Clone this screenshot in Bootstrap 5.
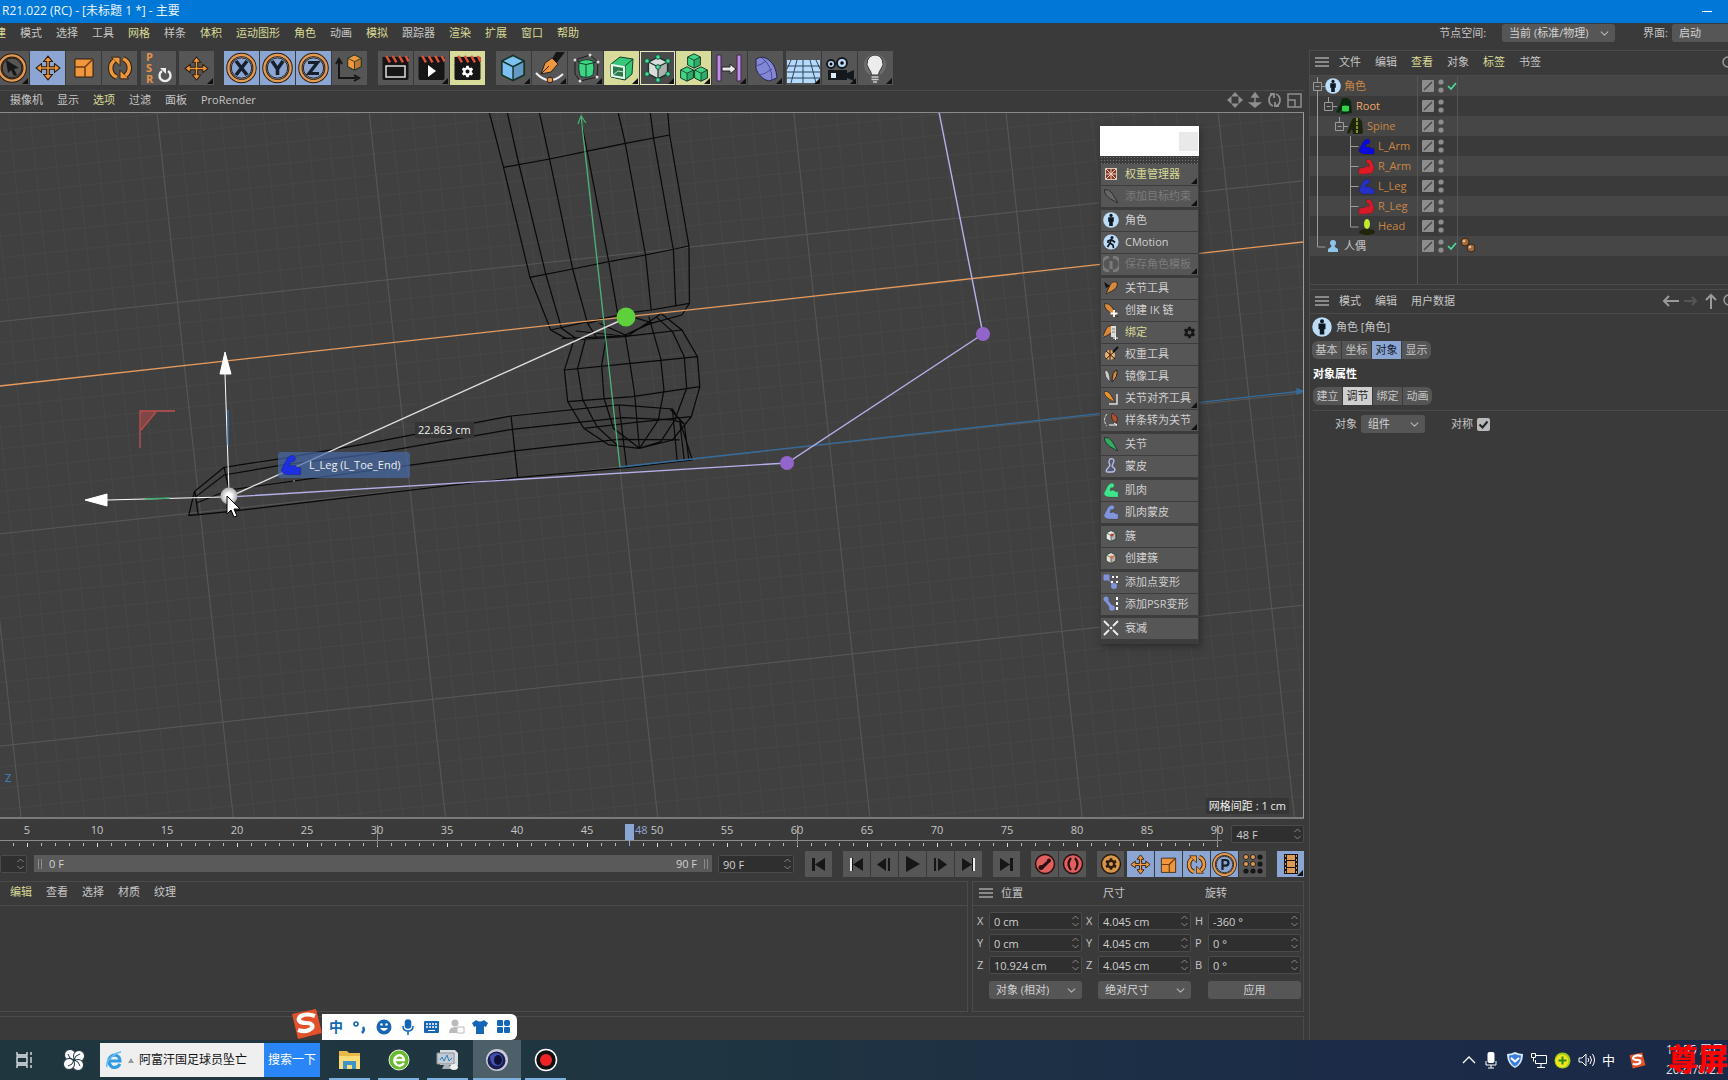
<!DOCTYPE html>
<html lang="zh-CN" data-bs-theme="dark">
<head>
<meta charset="utf-8">
<meta name="viewport" content="width=device-width, initial-scale=1">
<title>R21.022 (RC) - [未标题 1 *] - 主要</title>
<link href="https://cdn.jsdelivr.net/npm/bootstrap@5.3.0/dist/css/bootstrap.min.css" rel="stylesheet">
<script src="https://cdn.jsdelivr.net/npm/bootstrap@5.3.0/dist/js/bootstrap.bundle.min.js" defer></script>
<style>
:root{--panel:#3a3a3a;--edge:#4b4b4b;--btnbg:#565656;--txt:#c6c6c6;--yel:#d9da96;--sel:#8ba6d3;--ora:#f0963c}
body{font:11px/16px "Open Sans","Noto Sans CJK SC",sans-serif;color:var(--txt);background:var(--panel);height:100vh}
button,select,input{font:inherit;color:inherit}
svg{display:block;flex:none}
button{border:0;padding:0;background:none}
.titlebar{height:23px;background:#0078d7;color:#eaf4ff;font-size:12px;line-height:22px}
.titlebar .caption{margin-left:2px}
.menurow{height:27px;padding-bottom:7px}
.menu{gap:14px;white-space:nowrap}
.y{color:var(--yel)}
.mainmenu{margin-left:-16px}
.dd{height:18px;line-height:16px;padding:0 18px 0 7px;font-size:11px;border:0;border-radius:3px;background-color:var(--btnbg);background-position:right 6px center;background-size:9px 9px;color:#d2d2d2;width:auto}
.rightcol{width:419px;border-left:1px solid var(--edge)}
.leftcol{padding-right:5px}
.toolbar{height:40px;padding-top:1px;margin-left:-6px}
.grp{display:flex;gap:1px}
.tb{width:35px;height:34px;background:var(--btnbg);position:relative}
.tb.on,.kb.on{background:var(--sel)}
.tb.ye{background:#d8dc9b}
.tb.fr{box-shadow:inset 0 0 0 1px #e5e8c0;background:#4a4a4a}
.more::after{content:"";position:absolute;right:1px;bottom:1px;border:3px solid transparent;border-right-color:#111;border-bottom-color:#111}
.vmenu{height:22px;border-top:1px solid var(--edge);padding:0 1px 3px 10px}
.view{border-top:1px solid #8a8a8a;border-bottom:2px solid #7a7a7a;border-right:1px solid #9a9a9a;background:#404040;position:relative;overflow:hidden;min-height:0}
.scene{position:absolute;inset:0;width:100%;height:100%}
.chip{position:absolute;background:#353535;color:#eee;padding:0 3px}
.ruler{height:32px;position:relative;overflow:hidden}
.ruler svg{position:absolute;inset:0;width:100%;height:100%}
.ruler .nums{margin-left:-8px;padding-top:3px;position:relative}
.ruler .nums span{flex:0 0 70px;text-align:center}
.nowf{position:absolute;left:635px;top:3px;color:#8ba6d3}
.frame{width:74px;padding-top:6px}
.num{height:18px;border:1px solid var(--edge);background:#2f2f2f url("data:image/svg+xml,%3Csvg xmlns='http://www.w3.org/2000/svg' width='7' height='12' fill='none' stroke='%23888'%3E%3Cpath d='M.5 4l3-3 3 3M.5 8l3 3 3-3'/%3E%3C/svg%3E") no-repeat right 2px center;padding:0 4px;border-radius:2px;color:#d0d0d0;min-width:0;width:100%}
.transport{height:30px}
.kb{width:27px;height:26px;background:var(--btnbg);display:flex;align-items:center;justify-content:center;position:relative}
.range{height:17px;background:#5a5a5a;color:#d2d2d2;padding:0 4px;gap:7px}
.grip{width:4px;height:10px;border:solid #8a8a8a;border-width:0 1px}
.lower{height:131px;gap:4px}
.pane{border:1px solid var(--edge)}
.pane.flush{border-left:0}
.panehead{height:24px;border-bottom:1px solid var(--edge)}
.coord{width:332px}
.cgrid{display:grid;grid-template-columns:12px 1fr 16px 1fr 17px 1fr;padding:6px 2px 0 4px;row-gap:4px;align-items:center}
.cgrid .lab{padding-left:4px}
.cgrid .dd,.cgrid .apply{width:100%;margin-top:3px;height:18px}
.apply{background:var(--btnbg);border-radius:3px;color:#d2d2d2}
.status{height:24px;margin-top:4px;border-top:1px solid var(--edge);border-right:1px solid var(--edge)}
.ham{width:14px;height:10px;border:solid #8a8a8a;border-width:2px 0;position:relative}
.ham::after{content:"";position:absolute;left:0;right:0;top:2px;height:2px;background:#8a8a8a}
.omgr{height:235px;border-top:1px solid var(--edge);border-bottom:1px solid var(--edge)}
.objmenu{height:25px;padding:0 0 3px 5px;border-bottom:1px solid var(--edge)}
.tree{position:relative;min-height:0}
.trow{height:20px}
.trow:nth-child(odd){background:#464646}
.nm{width:108px;gap:3px;height:100%;border-right:1px solid #555;color:#c98643}
.fl{width:40px;height:100%;border-right:1px solid #555;padding-left:4px;gap:4px}
.fl .ok{margin-left:-1px}
.lv0{padding-left:15px}.lv1{padding-left:26px}.lv2{padding-left:37px}.lv3{padding-left:48px}
.treelines{position:absolute;left:0;top:0}
.amgr{border-top:1px solid var(--edge);margin-top:4px}
.tabs{gap:1px}
.tabs button{width:29px;height:18px;background:#555;color:#c6c6c6}
.tabs .on{background:var(--sel);color:#101828}
.tabs .lt{background:#cfcfcf;color:#222}
.tick{appearance:none;width:13px;height:13px;margin:0;border-radius:2px;background:#b9b9b9 url("data:image/svg+xml,%3Csvg xmlns='http://www.w3.org/2000/svg' viewBox='0 0 13 13' fill='none' stroke='%23222' stroke-width='2'%3E%3Cpath d='M2.500 6.500l3 3 5-6'/%3E%3C/svg%3E")}
.palette{position:absolute;left:1100px;top:13px;width:99px;background:#3c3c3c;box-shadow:2px 3px 6px #222a}
.palhead{height:30px;background:#fff;padding-right:1px}
.palhead button{width:19px;height:19px;background:#e9e9e9}
.dots{height:8px;background:radial-gradient(circle,#777 0 .6px,transparent 1px) 0 0/3px 3px}
.palbody{gap:3px;padding:0 1px 5px}
.pg{gap:1px}
.pg button{height:21px;background:#565656;color:#d0d0d0;display:flex;align-items:center;gap:6px;padding:0 0 1px 2px;position:relative;white-space:nowrap;width:100%}
.pg .off{color:#7b7b7b}
.pg .y{color:var(--yel)}
.pg .gearend{position:absolute;right:2px}
.taskbar{height:40px;background:linear-gradient(90deg,#20363f 0,#1f3541 40%,#1b2b48 80%,#1a2946 100%);color:#fff;position:relative}
.tk{width:49px;height:40px;display:flex;align-items:center;justify-content:center}
.app{box-shadow:inset 0 -2px #7db2e0;width:41px;margin:0 4px}
.app.live{width:48px;margin:0 0 0 1px;background:#4d6069}
.finder{width:164px;height:34px;background:#efefef;color:#111;gap:5px;padding-left:5px}
.finder input{border:0;background:none;width:118px;padding:0;color:#111;font-size:12px}
.go{width:56px;height:34px;background:#2a86f7;color:#fff;font-size:12px}
.tray{gap:7px}
.clock{width:62px;margin-left:13px;font-size:12px;line-height:20px;position:relative;white-space:nowrap;color:#dfe4ee}
.stamp{position:absolute;left:2px;top:8px;color:#f00;font-weight:900;font-size:30px;line-height:22px}
.ime{position:absolute;left:291px;bottom:40px;height:30px}
.imebar{background:#fff;height:26px;width:195px;color:#1666b5;font-size:14px;font-weight:700;padding-left:2px;margin-left:-1px}
.imebar>*{width:24px;display:flex;justify-content:center}
</style>
</head>
<body class="d-flex flex-column overflow-hidden">
<svg width="0" height="0" class="position-absolute">
<defs>
<symbol id="arrows" viewBox="0 0 24 24"><path d="M12 1l4 5h-2.800v4.800H18V8l5 4-5 4v-2.800h-4.800V18H16l-4 5-4-5h2.800v-4.800H6V16l-5-4 5-4v2.800h4.800V6H8z" fill="#f0963c" stroke="#2b1c0c"/></symbol>
<symbol id="scale" viewBox="0 0 24 24"><path d="M3 4h18v18H3z" fill="#f0963c" stroke="#2b1c0c"/><path d="M3 12h10v10M13 12l8-8" stroke="#6b3d10" fill="none" stroke-width="1.500"/></symbol>
<symbol id="rot" viewBox="0 0 24 24"><g fill="none" stroke="#2b1c0c" stroke-width="5"><path d="M9 20.500a9 9 0 0 1-2-15.500M15 3.500a9 9 0 0 1 2 15.500"/></g><path d="M4 2h8v8zM20 22h-8v-8z" fill="#f0963c" stroke="#2b1c0c" stroke-width=".8"/><g fill="none" stroke="#f0963c" stroke-width="3.200"><path d="M9 20.500a9 9 0 0 1-2-15.500M15 3.500a9 9 0 0 1 2 15.500"/></g></symbol>
<symbol id="ring" viewBox="0 0 32 32"><circle cx="16" cy="16" r="13.500" fill="none" stroke="#2b1c0c" stroke-width="4.500"/><circle cx="16" cy="16" r="13.500" fill="none" stroke="#e09a55" stroke-width="2.500"/><circle cx="16" cy="16" r="10.500" fill="none" stroke="#2b1c0c"/></symbol>
<symbol id="clap" viewBox="0 0 30 28"><rect x="1" y="8" width="28" height="19" rx="2" fill="#161616"/><path d="M1 2h28v7H1z" fill="#161616"/><path d="M5 1l4 7M12 1l4 7M19 1l4 7M26 1l3 6" stroke="#e0533c" stroke-width="2.500"/></symbol>
<symbol id="gear" viewBox="0 0 16 16"><path d="M6.500 1h3l.4 2 1.500.8 2-.7 1.500 2.600-1.600 1.400v1.800l1.600 1.400-1.500 2.600-2-.7-1.500.8-.4 2h-3l-.4-2-1.500-.8-2 .7L1.100 10.300l1.600-1.400V7.100L1.100 5.700l1.500-2.600 2 .7L6.100 3zM8 5.500a2.500 2.500 0 1 0 0 5 2.500 2.500 0 0 0 0-5z" fill="currentColor" fill-rule="evenodd"/></symbol>
<symbol id="man" viewBox="0 0 16 16"><circle cx="8" cy="8" r="7.800" fill="#bcdcf8"/><circle cx="8" cy="3.400" r="1.600" fill="#101820"/><path d="M5.200 5.200h5.600v4.500h-1V14H6.200V9.700h-1z" fill="#101820"/></symbol>
<symbol id="walk" viewBox="0 0 16 16"><circle cx="8" cy="8" r="7.600" fill="#bcdcf8"/><circle cx="9" cy="3.500" r="1.500" fill="#101820"/><path d="M8.500 5L7 9l3 2 .5 3M7 9l-2.500 4M8.500 5.500L5 7v2M9 6l3 2.500" stroke="#101820" stroke-width="1.700" fill="none"/></symbol>
<symbol id="armL" viewBox="0 0 18 18"><path d="M5 5q2-4 6-4l2 3-2 2.500H8.500L8 10q5-2 6 1h3v6H8q-6 0-7-4z" fill="currentColor" stroke="#0004" stroke-width=".6"/></symbol>
<symbol id="armR" viewBox="0 0 18 18"><path d="M9 2q4-2 5.500 2L17 10q0 5-4 6.500-6 1-12 .5v-6l6-1q3-2 5-.5L11.500 6 9 5.500z" fill="currentColor" stroke="#0004" stroke-width=".6"/></symbol>
<symbol id="bone" viewBox="0 0 16 16"><path d="M1.500 1.500Q6 1 9 5l6 10Q6 11 3 7 1 4 1.500 1.500z" fill="currentColor" stroke="#222" stroke-width=".8"/></symbol>
<symbol id="boneR" viewBox="0 0 16 16"><path d="M14 2q-5-1-7 3L3 14q7-3 10-6 2-3 1-6z" fill="currentColor" stroke="#222" stroke-width=".8"/></symbol>
<symbol id="cubelet" viewBox="0 0 20 20"><path d="M10 1l8 4v10l-8 4-8-4V5z" fill="currentColor" stroke="#163527" stroke-width="1.200"/><path d="M2 5l8 4 8-4M10 9v10" stroke="#163527" fill="none"/><path d="M10 9l8-4v10l-8 4z" fill="#0003"/></symbol>
<symbol id="flag" viewBox="0 0 20 14"><rect width="12" height="12" x="0" y="1" rx="1" fill="#8d8d8d"/><path d="M2 11l8-8" stroke="#444" stroke-width="1.500"/></symbol>
<symbol id="ddots" viewBox="0 0 6 16"><circle cx="3" cy="4" r="2.600" fill="#8d8d8d"/><circle cx="3" cy="12" r="2.600" fill="#8d8d8d"/></symbol>
<symbol id="chk" viewBox="0 0 10 10"><path d="M1 5l3 3 5-6" fill="none" stroke="#4ddb9a" stroke-width="1.600"/></symbol>
<symbol id="slogo" viewBox="0 0 32 32"><path d="M1 6l24-5 6 24-24 6z" fill="#e2512a"/><path d="M24 8q-8-3-14 0c-5 4-1 7 5 7 8 0 8 5 3 7-4 2-8 1-11 0" fill="none" stroke="#fff" stroke-width="4.200"/></symbol>
</defs>
</svg>

<header class="titlebar d-flex justify-content-between"><span class="caption">R21.022 (RC) - [未标题 1 *] - 主要</span><button aria-label="最小化" class="pe-3"><svg width="10" height="2"><rect width="10" height="1" fill="#fff"/></svg></button></header>

<div class="menurow d-flex align-items-center">
<nav class="menu mainmenu d-flex flex-grow-1"><button class="y">创建</button><button>模式</button><button>选择</button><button>工具</button><button class="y">网格</button><button>样条</button><button class="y">体积</button><button class="y">运动图形</button><button class="y">角色</button><button>动画</button><button class="y">模拟</button><button>跟踪器</button><button class="y">渲染</button><button class="y">扩展</button><button class="y">窗口</button><button class="y">帮助</button></nav>
<label for="space" class="me-3">节点空间:</label><select id="space" class="dd form-select" style="width:113px"><option>当前 (标准/物理)</option></select>
<label for="lay" class="ms-4 ps-1 me-1">界面:</label><select id="lay" class="dd form-select rounded-end-0" style="width:56px;background-image:none"><option>启动</option></select>
</div>

<main class="d-flex flex-grow-1" style="min-height:0">
<div class="leftcol d-flex flex-column flex-grow-1" style="min-width:0">
<div class="toolbar d-flex">
 <div class="grp me-1">
  <button class="tb more" aria-label="选择"><svg width="35" height="34"><use href="#ring" x="3" y="2" width="30" height="30"/><path d="M12 9l13 8-5 1 3 6-3 1-3-6-3 3z" fill="#181818"/></svg></button>
  <button class="tb on" aria-label="移动"><svg width="35" height="34"><use href="#arrows" x="5" y="4" width="26" height="26"/></svg></button>
  <button class="tb" aria-label="缩放"><svg width="35" height="34"><use href="#scale" x="6" y="4" width="24" height="24"/></svg></button>
  <button class="tb" aria-label="旋转"><svg width="35" height="34"><use href="#rot" x="5" y="4" width="26" height="26"/></svg></button>
 </div>
 <button class="tb" style="margin-right:3px" aria-label="PSR"><svg width="35" height="34"><g fill="#e8924a" font-size="11" font-weight="700" font-family="Open Sans"><text x="5" y="10">P</text><text x="5" y="21">S</text><text x="5" y="32">R</text></g><path d="M21 20a5.500 5.500 0 1 0 6 0" fill="none" stroke="#eee" stroke-width="2.400"/><path d="M19 17h6v6z" fill="#eee"/></svg></button>
 <button class="tb more" style="margin-right:10px" aria-label="放置"><svg width="35" height="34"><use href="#arrows" x="5" y="5" width="25" height="25"/></svg></button>
 <div class="grp" style="margin-right:11px">
  <button class="tb on" aria-label="X 轴"><svg width="35" height="34"><use href="#ring" x="2" y="1" width="31" height="32"/><path d="M12 10l11 14M23 10L12 24" stroke="#16202c" stroke-width="3.600"/></svg></button>
  <button class="tb on" aria-label="Y 轴"><svg width="35" height="34"><use href="#ring" x="2" y="1" width="31" height="32"/><path d="M12 10l5.500 8v6M23 10l-5.500 8" stroke="#16202c" stroke-width="3.600" fill="none"/></svg></button>
  <button class="tb on" aria-label="Z 轴"><svg width="35" height="34"><use href="#ring" x="2" y="1" width="31" height="32"/><path d="M12 11.500h9.500L13 22.500h10" stroke="#16202c" stroke-width="3.200" fill="none"/></svg></button>
  <button class="tb" aria-label="坐标系统"><svg width="35" height="34"><path d="M7 10v17h17M4 13l3-5 3 5M22 24l5 3-5 3" fill="none" stroke="#161616" stroke-width="2"/><g color="#f0963c"><use href="#cubelet" x="14" y="3" width="17" height="17"/></g></svg></button>
 </div>
 <div class="grp" style="margin-right:11px">
  <button class="tb" aria-label="渲染视图"><svg width="35" height="34"><use href="#clap" x="3" y="4" width="29" height="26"/><path d="M8 15h19v11H8z" fill="none" stroke="#ddd" stroke-width="1.500"/></svg></button>
  <button class="tb more" aria-label="渲染"><svg width="35" height="34"><use href="#clap" x="3" y="4" width="29" height="26"/><path d="M14 14l8 6-8 6z" fill="#fff"/></svg></button>
  <button class="tb ye" aria-label="渲染设置"><svg width="35" height="34"><use href="#clap" x="3" y="4" width="29" height="26"/><g color="#fff"><use href="#gear" x="11" y="14" width="13" height="13"/></g></svg></button>
 </div>
 <div class="grp" style="margin-right:3px">
  <button class="tb more" aria-label="立方体"><svg width="35" height="34"><g color="#7cc0f4"><use href="#cubelet" x="3" y="3" width="28" height="28"/></g></svg></button>
  <button class="tb more" aria-label="画笔"><svg width="35" height="34"><path d="M24 1h9L23 14l-4-4z" fill="#161616"/><path d="M20 7l6 6-7 8-10 2 4-11z" fill="#f0963c" stroke="#222"/><path d="M9 23l8-8" stroke="#222"/><path d="M4 22q13 14 27 1" fill="none" stroke="#eee" stroke-width="2"/><circle cx="18" cy="29" r="2.800" fill="#f0963c" stroke="#222"/></svg></button>
  <button class="tb more" aria-label="细分曲面"><svg width="35" height="34"><path d="M7 9l15-5 8 7-1 15-17 4-5-7zM7 9l9 4 14-2" fill="none" stroke="#1b1b1b"/><path d="M11 11q6-4 14-1 2 7 0 14-6 4-13 1-2-7-1-14z" fill="#3ed684" stroke="#14402a"/><path d="M11 12q7 3 14 0M18 14v12" stroke="#14402a" fill="none"/><g fill="#ddd"><circle cx="7" cy="9" r="1.500"/><circle cx="22" cy="4" r="1.500"/><circle cx="30" cy="11" r="1.500"/><circle cx="29" cy="26" r="1.500"/><circle cx="12" cy="30" r="1.500"/></g></svg></button>
  <button class="tb ye more" aria-label="挤压"><svg width="35" height="34"><path d="M7 13l9-7 13 2-1 15-7 6-14-3z" fill="#35c878" stroke="#143d28"/><path d="M21 15l8-7M21 15v14" stroke="#143d28"/><path d="M8 14l12 2v11L8 25z" fill="#2b7a4c" stroke="#e4f8ec" stroke-width="2"/><path d="M9 24l5-4 6 1" stroke="#bff0d2" fill="none"/></svg></button>
  <button class="tb fr more" aria-label="晶格"><svg width="35" height="34"><g color="#d9dcda"><use href="#cubelet" x="6" y="5" width="24" height="24"/></g><g fill="#4bdc93" stroke="#154"><circle cx="18" cy="6" r="2.300"/><circle cx="7" cy="10" r="2.300"/><circle cx="28" cy="10" r="2.300"/><circle cx="18" cy="16" r="2.300"/><circle cx="7" cy="23" r="2.300"/><circle cx="28" cy="23" r="2.300"/><circle cx="18" cy="29" r="2.300"/></g></svg></button>
  <button class="tb ye more" aria-label="克隆"><svg width="35" height="34"><g color="#3ed684"><use href="#cubelet" x="10" y="2" width="16" height="16"/><use href="#cubelet" x="3" y="15" width="16" height="16"/><use href="#cubelet" x="17" y="15" width="16" height="16"/></g></svg></button>
  <button class="tb more" aria-label="域"><svg width="35" height="34"><path d="M5 4h4v26H5zM25 4h4v26h-4z" fill="#c08ae6" stroke="#3a2450"/><path d="M10 16h8v-3l6 5-6 5v-3h-8z" fill="#e8e8e8" stroke="#222"/></svg></button>
  <button class="tb more" aria-label="变形器"><svg width="35" height="34"><path d="M8 8q7-4 13 1 7 5 8 18l-8 3Q12 28 8 18z" fill="#8287d6" stroke="#26264a"/><path d="M14 7q10 7 10 22M8 15q5-1 10-5M12 24q5-1 12-6" fill="none" stroke="#4a4e96"/></svg></button>
 </div>
 <div class="grp">
  <button class="tb more" aria-label="地面"><svg width="35" height="34"><path d="M1 9h33v23H1z" fill="#b5dafc"/><path d="M1 15h33M1 21h33M1 27h33M11 9L5 32M17 9v23M24 9l6 23M5 9l-4 9M30 9l4 9" stroke="#2f4558" fill="none"/></svg></button>
  <button class="tb more" aria-label="摄像机"><svg width="35" height="34"><circle cx="9" cy="13" r="4" fill="#bcdcf8" stroke="#15191d" stroke-width="2"/><circle cx="20" cy="12" r="5" fill="#bcdcf8" stroke="#15191d" stroke-width="2"/><circle cx="9" cy="13" r="1.500"/><circle cx="20" cy="12" r="1.800"/><path d="M6 19h19v3l7-3v11l-7-3v2H6z" fill="#15191d"/><path d="M9 22h5v5H9z" fill="#dcecfb"/></svg></button>
  <button class="tb more" aria-label="灯光"><svg width="35" height="34"><circle cx="17" cy="14" r="11" fill="#fff2"/><path d="M17 4a8.500 8.500 0 0 1 6 14q-2 2-2.500 6h-7q-.5-4-2.500-6a8.500 8.500 0 0 1 6-14z" fill="#ececec" stroke="#333"/><path d="M13.500 26h7M13.500 28.500h7M15 31h4" stroke="#ccc" stroke-width="1.500"/></svg></button>
 </div>
</div>

<div class="vmenu d-flex align-items-center justify-content-between">
 <nav class="menu d-flex"><button>摄像机</button><button>显示</button><button class="y">选项</button><button>过滤</button><button>面板</button><button>ProRender</button></nav>
 <svg width="76" height="16" fill="none" stroke="#8f8f8f" stroke-width="2"><path d="M8 0l4 4.500H4zM8 16l4-4.500H4zM0 8l4.500-4v8zM16 8l-4.500-4v8z" fill="#8f8f8f" stroke="none"/><path d="M28 3v8M28 1l3 4h-6zM28 15l5-4H23z" fill="#8f8f8f" stroke-width="1.500"/><path d="M46 14a6.500 6.500 0 0 1 0-12M49 2a6.500 6.500 0 0 1 0 12M43 2h4v4M52 14h-4v-4" stroke-width="1.800"/><path d="M61 2h13v13H61zM61 8h7v7" stroke-width="1.500"/></svg>
</div>

<section class="view flex-grow-1">
<svg class="scene" viewBox="0 113 1303 704" preserveAspectRatio="xMinYMin slice">
 <defs>
  <pattern id="fine" width="21.100" height="21.100" patternUnits="userSpaceOnUse" patternTransform="translate(177 302) rotate(-6.170)"><path d="M0 .5h21.100M.5 0v21.100" stroke="#464646" fill="none"/></pattern>
  <pattern id="coarse" width="211" height="211" patternUnits="userSpaceOnUse" patternTransform="translate(177 302) rotate(-6.170)"><path d="M0 .5h211M.5 0v211" stroke="#565656" fill="none"/></pattern>
  <radialGradient id="ball"><stop offset=".3" stop-color="#fff"/><stop offset="1" stop-color="#aaa"/></radialGradient>
 </defs>
 <rect y="113" width="1303" height="704" fill="url(#fine)"/><rect y="113" width="1303" height="704" fill="url(#coarse)"/>
 <g transform="translate(0 110) scale(.4719 .3333)" fill="none" stroke="#080808" stroke-width="1.200">
  <path vector-effect="non-scaling-stroke" d="M1037 8l30 164 56 330 44 158 33 26M1075 8l25 157 57 330 33 160 30 30M1143 8l22 142 49 330 31 160 18 40M1230 20l15 110 45 325 20 165M1310 8l15 92 43 335 12 165M1378 8l7 77 42 335 5 170M1415 8l4 67 41 333 1 172-16 35M1067 172l98-25 75-22 85-25 94-25M1123 502l91-25 76-22 78-20 92-27M1167 660l78-25 95-28 40-7 81-20M1190 686l130-8 60-38 65-25M1245 640l75-28 60 26-60 40-100-15M1270 640l60 38 70-66"/>
  <path vector-effect="non-scaling-stroke" d="M1215 695l-19 85 7 95 34 80 53 50 65 10 70-25 40-70 18-90-5-90-33-80-45-50M1240 690l-16 85 11 95 30 80 45 58M1285 680l-10 85 5 100 20 90 55 60M1325 675l10 85 10 95 5 85 5 75M1375 620l25 125 7 95-12 90-40 85M1390 620l35 45 25 75 5 95-25 95-30 65-45 20M1196 780l141-20 141-20M1203 875l137-15 143-30M1215 690l105-10 125-20M1237 955l110-18 118-17"/>
  <path vector-effect="non-scaling-stroke" d="M475 1072l125-27 180-45 303-82 227-33 115 12 15 33 27 120M415 1160l60-65 125-30 180-32 305-75 235-35 105 7 25 10M415 1180l70-40 205-40 400-77 220-35 130 2M405 1216l80-11 610-102 233-30 139-23M475 1072l-63 73-12 71 20-2-7-69M475 1072l10 68 5 65M1083 918l14 185M1312 888l16 185M1425 897l10 156M1440 930l10 123M1420 897l30 45 10 110"/>
 </g>
 <path d="M0 386L1303 242" stroke="#e89a5c" stroke-width="1.300"/>
 <path d="M620 467L1303 391M1303 391l-6-2v5z" stroke="#336c9e" fill="#336c9e" stroke-width="1.300"/>
 <path d="M581 116l39 351M578 124l3-8 5 7" stroke="#45b877" fill="none" stroke-width="1.200"/>
 <path d="M939 112L983 334 787 463 229 497" stroke="#b4b0e8" stroke-width="1.400" fill="none"/>
 <path d="M229 497L626 318" stroke="#ddd" stroke-width="1.400"/>
 <circle cx="983" cy="334" r="7" fill="#9265cb"/><circle cx="787" cy="463" r="7" fill="#9265cb"/><circle cx="626" cy="317" r="9.500" fill="#5ed03b"/>
 <path d="M229 492L225 374M225 352l-5 22h11zM222 497l-115 3M85 500l22-6v12z" fill="#fff" stroke="#fff"/>
 <path d="M228 410v35" stroke="#2e7fc4"/><path d="M145 499l25-1" stroke="#3fae72" stroke-width="1.500"/>
 <path d="M140 448v-37h35M141 430l15-18" fill="none" stroke="#c0504d" stroke-width="1.300"/><path d="M140 411h17l-16 20z" fill="#b84a4a88"/>
 <circle cx="229" cy="496" r="8.500" fill="url(#ball)"/>
 <rect x="278" y="452" width="132" height="26" rx="3" fill="#456aa8b0"/>
 <g color="#1d2fe0"><use href="#armL" x="280" y="454" width="22" height="22"/></g>
 <path d="M227 496v18l4-4 3 7 3-1-3-7h6z" fill="#fff" stroke="#000"/>
 <path d="M293 481h2" stroke="#aaa"/>
</svg>
<span class="chip" style="left:415px;top:309px">22.863 cm</span>
<span class="chip bg-transparent" style="left:306px;top:344px">L_Leg (L_Toe_End)</span>
<span class="chip bg-transparent" style="left:2px;top:657px;color:#3f83c8">Z</span>
<span class="chip" style="right:14px;bottom:3px">网格间距 : 1 cm</span>
<aside class="palette">
 <div class="palhead d-flex justify-content-end align-items-center"><button aria-label="关闭"></button></div>
 <div class="dots"></div>
 <div class="palbody d-flex flex-column">
  <div class="pg d-flex flex-column">
   <button class="y more"><svg width="16" height="16"><path d="M2 2h12v12H2z" fill="#d8c8b8"/><path d="M3 3h10v10H3z" fill="#8a3522"/><path d="M3 3l10 10M13 3L3 13M8 3v10M3 8h10" stroke="#e4d4c8"/></svg>权重管理器</button>
   <button class="off more"><svg width="16" height="16" color="#666"><use href="#bone"/></svg>添加目标约束</button></div>
  <div class="pg d-flex flex-column">
   <button><svg width="16" height="16"><use href="#man"/></svg>角色</button>
   <button><svg width="16" height="16"><use href="#walk"/></svg>CMotion</button>
   <button class="off more"><svg width="16" height="16"><path d="M6 1a7 7 0 0 0 0 14M10 1a7 7 0 0 1 0 14" fill="none" stroke="#7a7a7a" stroke-width="3"/><path d="M8 5v8" stroke="#7a7a7a" stroke-width="3"/></svg>保存角色模板</button></div>
  <div class="pg d-flex flex-column">
   <button><svg width="16" height="16" color="#d88a3a"><use href="#boneR"/><path d="M1 2l6 4-4 2z" fill="#111"/></svg>关节工具</button>
   <button><svg width="16" height="16" color="#d88a3a"><use href="#bone"/><path d="M11 8v7M7.500 11.500h7" stroke="#fff" stroke-width="1.800"/></svg>创建 IK 链</button>
   <button class="y"><svg width="16" height="16" color="#d88a3a"><use href="#boneR" x="-4"/><path d="M8 2h5v11H8z" fill="#ddd"/><path d="M9 5h3M9 8h3" stroke="#777"/><path d="M10 14h5M12.500 12v4" stroke="#fff"/></svg>绑定<svg class="gearend" width="13" height="13" color="#161616"><use href="#gear"/></svg></button>
   <button><svg width="16" height="16"><circle cx="7" cy="9" r="5" fill="#e8b070"/><path d="M3 5l9 8M12 5l-9 8M7 4v10" stroke="#2b1a10"/><path d="M10 6l5-5" stroke="#111" stroke-width="2"/></svg>权重工具</button>
   <button><svg width="16" height="16"><path d="M2 2q5 0 5 12Q1 9 2 2z" fill="#ccc" stroke="#333" stroke-width=".7"/><path d="M14 2q-5 1-5 12 6-5 5-12z" fill="#d88a3a" stroke="#222"/></svg>镜像工具</button>
   <button class="more"><svg width="16" height="16" color="#e8922e"><use href="#bone" width="13" height="13"/><path d="M14 4v10H6" stroke="#ddd" stroke-width="1.500" fill="none"/></svg>关节对齐工具</button>
   <button class="more"><svg width="16" height="16"><path d="M4 2q-5 6 0 12" fill="none" stroke="#ddd" stroke-dasharray="3 1"/><path d="M9 1q8 4 4 10Q7 8 9 1z" fill="#b5502a" stroke="#222" stroke-width=".7"/><path d="M6 13h8l-3-2" stroke="#fff" fill="none"/></svg>样条转为关节</button></div>
  <div class="pg d-flex flex-column">
   <button><svg width="16" height="16" color="#2fae60"><use href="#bone"/></svg>关节</button>
   <button><svg width="16" height="16"><path d="M7 1q4-1 4 2L9 8l3 3q0 3-3 3H4q-2-1 1-4l2-3q-2-3 0-6z" fill="#555a70" stroke="#b8bfe6" stroke-width="1.300"/></svg>蒙皮</button></div>
  <div class="pg d-flex flex-column">
   <button><svg width="16" height="16" color="#3fe58c"><use href="#armL"/></svg>肌肉</button>
   <button><svg width="16" height="16" color="#8095dc"><use href="#armL"/></svg>肌肉蒙皮</button></div>
  <div class="pg d-flex flex-column">
   <button><svg width="16" height="16" color="#e8e8e8"><use href="#cubelet" x="2" y="2" width="12" height="12"/><circle cx="9" cy="7" r="1.600" fill="#c03a2a"/></svg>簇</button>
   <button><svg width="16" height="16" color="#eadbd2"><use href="#cubelet" x="2" y="2" width="12" height="12"/><circle cx="9" cy="7" r="1.600" fill="#e0703a"/></svg>创建簇</button></div>
  <div class="pg d-flex flex-column">
   <button><svg width="16" height="16"><path d="M4 4l7 8M1 1h5v5H1z" stroke="#7f93dc" fill="#7f93dc"/><circle cx="11" cy="12" r="3" fill="#7f93dc"/><path d="M9 3h2M13 3h2M14 7v2M9 7v2" stroke="#fff" stroke-width="2"/></svg>添加点变形</button>
   <button><svg width="16" height="16"><path d="M3 4l6 8" stroke="#7f93dc" stroke-width="3"/><circle cx="3" cy="3" r="2.500" fill="#7f93dc"/><circle cx="9" cy="12" r="2.800" fill="#7f93dc"/><path d="M14 1v3M14 6v3M14 11v3" stroke="#fff" stroke-width="2"/></svg>添加PSR变形</button></div>
  <div class="pg d-flex flex-column"><button><svg width="16" height="16"><path d="M1 1l5 5M15 1l-5 5M1 15l5-5M15 15l-5-5" stroke="#eee" stroke-width="1.800"/><circle cx="8" cy="8" r="1.300" fill="#eee"/></svg>衰减</button></div>
 </div>
</aside>
</section>

<div class="d-flex">
 <div class="ruler flex-grow-1 me-1">
  <svg aria-hidden="true"><defs><pattern id="t1" x="13" width="14" height="40" patternUnits="userSpaceOnUse"><path d="M.5 24v3" stroke="#bbb"/></pattern><pattern id="t5" x="27" width="70" height="40" patternUnits="userSpaceOnUse"><path d="M.5 24v4" stroke="#ddd"/></pattern></defs><rect width="1224" height="32" fill="url(#t1)"/><rect width="1224" height="32" fill="url(#t5)"/><path d="M0 21.500h1222M377.500 6v21M797.500 6v21M1217.500 6v21" stroke="#8c8c8c"/><path d="M625 5h9v16h-4v6h-1v-6h-4z" fill="#8ba6d3"/></svg>
  <div class="nums d-flex"><span>5</span><span>10</span><span>15</span><span>20</span><span>25</span><span>30</span><span>35</span><span>40</span><span>45</span><span>50</span><span>55</span><span>60</span><span>65</span><span>70</span><span>75</span><span>80</span><span>85</span><span>90</span></div><span class="nowf">48</span>
 </div>
 <div class="frame"><input class="num" aria-label="当前帧" value="48 F"></div>
</div>

<div class="transport d-flex align-items-start">
 <input class="num mt-1" aria-label="起始" value="" style="width:27px;margin-right:7px">
 <div class="range d-flex align-items-center flex-grow-1 mt-1" style="margin-right:6px"><i class="grip"></i><span class="flex-grow-1">0 F</span><span>90 F</span><i class="grip"></i></div>
 <input class="num mt-1" aria-label="结束" value="90 F" style="width:76px;margin-right:11px">
 <button class="kb" style="margin-right:11px" aria-label="开头"><svg width="15" height="15"><path d="M1 1h3v13H1zM14 1v13L4 7.500z" fill="#161616"/></svg></button>
 <div class="grp" style="margin-right:11px">
  <button class="kb" aria-label="上一关键帧"><svg width="15" height="15"><path d="M1 1h2v13H1z" fill="#eee"/><path d="M3 1h1v13H3zM14 1v13L4 7.500z" fill="#161616"/></svg></button>
  <button class="kb" aria-label="上一帧"><svg width="15" height="15"><path d="M9 1v13L0 7.500zM11 1h2v13h-2z" fill="#161616"/></svg></button>
  <button class="kb" aria-label="播放"><svg width="15" height="16"><path d="M1 0l14 8-14 8z" fill="#161616"/></svg></button>
  <button class="kb" aria-label="下一帧"><svg width="15" height="15"><path d="M5 1v13l9-6.500zM1 1h2v13H1z" fill="#161616"/></svg></button>
  <button class="kb" aria-label="下一关键帧"><svg width="15" height="15"><path d="M12 1h2v13h-2z" fill="#eee"/><path d="M11 1h1v13h-1zM1 1v13l10-6.500z" fill="#161616"/></svg></button>
 </div>
 <button class="kb" style="margin-right:11px" aria-label="结尾"><svg width="15" height="15"><path d="M11 1h3v13h-3zM1 1v13l10-6.500z" fill="#161616"/></svg></button>
 <div class="grp" style="margin-right:11px">
  <button class="kb" aria-label="记录"><svg width="22" height="22"><circle cx="11" cy="11" r="9.500" fill="#e0605e" stroke="#2a1010" stroke-width="1.500"/><path d="M6 14l8-7 2 2-7 7z" fill="#2a1010"/><circle cx="7" cy="14.500" r="2.500" fill="#2a1010"/><circle cx="15" cy="7.500" r="2" fill="#2a1010"/></svg></button>
  <button class="kb" aria-label="自动关键帧"><svg width="22" height="22"><circle cx="11" cy="11" r="9.500" fill="#e0605e" stroke="#2a1010" stroke-width="1.500"/><path d="M9 5q-5 6 0 12M13 5q5 6 0 12" fill="none" stroke="#2a1010" stroke-width="2.200"/></svg></button>
 </div>
 <button class="kb" style="margin-right:3px" aria-label="关键帧选项"><svg width="22" height="22"><circle cx="11" cy="11" r="9.500" fill="#d9964e" stroke="#2b1c0c" stroke-width="1.500"/><g color="#2b1c0c"><use href="#gear" x="4.500" y="4.500" width="13" height="13"/></g></svg></button>
 <div class="grp" style="margin-right:11px">
  <button class="kb on" aria-label="位置"><svg width="21" height="21"><use href="#arrows"/></svg></button>
  <button class="kb on" aria-label="缩放"><svg width="19" height="19"><use href="#scale"/></svg></button>
  <button class="kb on" aria-label="旋转"><svg width="21" height="21"><use href="#rot"/></svg></button>
  <button class="kb on" aria-label="参数"><svg width="25" height="25"><use href="#ring"/><path d="M10.500 18V8h3q3 0 3 2.800t-3 2.800h-3" fill="none" stroke="#16202c" stroke-width="2.200"/></svg></button>
  <button class="kb" aria-label="点级别"><svg width="22" height="22"><g fill="#e09a55" stroke="#222"><circle cx="4" cy="4" r="2.500"/><circle cx="11" cy="4" r="2.500"/><circle cx="4" cy="11" r="2.500"/><circle cx="11" cy="11" r="2.500"/></g><g fill="#161616"><circle cx="18" cy="4" r="2.600"/><circle cx="18" cy="11" r="2.600"/><circle cx="4" cy="18" r="2.600"/><circle cx="11" cy="18" r="2.600"/><circle cx="18" cy="18" r="2.600"/></g></svg></button>
 </div>
 <button class="kb on more" aria-label="时间线"><svg width="16" height="22"><path d="M1 1h14v20H1z" fill="#161616"/><path d="M4 2h8v5H4zM4 8h8v6H4zM4 15h8v5H4z" fill="#e09a55"/><path d="M2.500 2v18M13.500 2v18" stroke="#e09a55" stroke-dasharray="2 2"/></svg></button>
</div>

<div class="lower d-flex">
 <section class="pane flush flex-grow-1"><nav class="panehead menu d-flex align-items-center" style="padding:0 0 3px 10px"><button class="y">编辑</button><button>查看</button><button>选择</button><button>材质</button><button>纹理</button></nav></section>
 <section class="pane coord">
  <div class="panehead d-flex align-items-center" style="padding:0 0 1px 6px"><i class="ham me-2"></i><span style="width:102px">位置</span><span style="width:102px">尺寸</span><span>旋转</span></div>
  <div class="cgrid">
   <label for="px">X</label><input id="px" class="num" value="0 cm"><label class="lab" for="sx">X</label><input id="sx" class="num" value="4.045 cm"><label class="lab" for="rh">H</label><input id="rh" class="num" value="-360 °">
   <label for="py">Y</label><input id="py" class="num" value="0 cm"><label class="lab" for="sy">Y</label><input id="sy" class="num" value="4.045 cm"><label class="lab" for="rp">P</label><input id="rp" class="num" value="0 °">
   <label for="pz">Z</label><input id="pz" class="num" value="10.924 cm"><label class="lab" for="sz">Z</label><input id="sz" class="num" value="4.045 cm"><label class="lab" for="rb">B</label><input id="rb" class="num" value="0 °">
   <span></span><select class="dd form-select" aria-label="坐标模式"><option>对象 (相对)</option></select><span></span><select class="dd form-select" aria-label="尺寸模式"><option>绝对尺寸</option></select><span></span><button class="apply">应用</button>
  </div>
 </section>
</div>
<div class="status"></div>
</div>

<aside class="rightcol d-flex flex-column flex-shrink-0">
 <section class="omgr d-flex flex-column">
  <nav class="menu objmenu d-flex align-items-center"><i class="ham" style="margin-right:-4px"></i><button>文件</button><button>编辑</button><button class="y">查看</button><button>对象</button><button class="y">标签</button><button>书签</button><svg class="ms-auto" width="6" height="12" fill="none" stroke="#9a9a9a"><circle cx="6" cy="6" r="5" stroke-width="1.500"/></svg></nav>
  <div class="tree flex-grow-1 d-flex flex-column">
   <div class="trow d-flex"><span class="nm lv0 d-flex align-items-center"><svg width="16" height="16"><use href="#man"/></svg>角色</span><span class="fl d-flex align-items-center"><svg width="12" height="14"><use href="#flag" width="20" height="14"/></svg><svg width="6" height="16"><use href="#ddots"/></svg><svg width="10" height="10" class="ok"><use href="#chk"/></svg></span></div>
   <div class="trow d-flex"><span class="nm lv1 d-flex align-items-center" style="color:#f0a868"><svg width="17" height="18"><path d="M6 1h6l3 3 1 12-8 1H5l1-5-3 4-3-1 4-7z" fill="#0b2a10"/><path d="M6 9q3-1 7 0v5q-4 1-7 0z" fill="#35d04a"/></svg>Root</span><span class="fl d-flex align-items-center"><svg width="12" height="14"><use href="#flag" width="20" height="14"/></svg><svg width="6" height="16"><use href="#ddots"/></svg></span></div>
   <div class="trow d-flex"><span class="nm lv2 d-flex align-items-center"><svg width="17" height="18"><path d="M6 1h6l3 3 1 12-2 1H6l-1-5-3 5-2-1 4-11z" fill="#1c240c"/><path d="M10 1v16" stroke="#a8b832" stroke-dasharray="3 1" stroke-width="1.500"/></svg>Spine</span><span class="fl d-flex align-items-center"><svg width="12" height="14"><use href="#flag" width="20" height="14"/></svg><svg width="6" height="16"><use href="#ddots"/></svg></span></div>
   <div class="trow d-flex"><span class="nm lv3 d-flex align-items-center"><svg width="17" height="17" color="#0a0ae0"><use href="#armL"/></svg>L_Arm</span><span class="fl d-flex align-items-center"><svg width="12" height="14"><use href="#flag" width="20" height="14"/></svg><svg width="6" height="16"><use href="#ddots"/></svg></span></div>
   <div class="trow d-flex"><span class="nm lv3 d-flex align-items-center"><svg width="17" height="17" color="#e01a24"><use href="#armR"/></svg>R_Arm</span><span class="fl d-flex align-items-center"><svg width="12" height="14"><use href="#flag" width="20" height="14"/></svg><svg width="6" height="16"><use href="#ddots"/></svg></span></div>
   <div class="trow d-flex"><span class="nm lv3 d-flex align-items-center"><svg width="17" height="17" color="#2530c8"><use href="#armL"/></svg>L_Leg</span><span class="fl d-flex align-items-center"><svg width="12" height="14"><use href="#flag" width="20" height="14"/></svg><svg width="6" height="16"><use href="#ddots"/></svg></span></div>
   <div class="trow d-flex"><span class="nm lv3 d-flex align-items-center"><svg width="17" height="17" color="#d81a28"><use href="#armR"/></svg>R_Leg</span><span class="fl d-flex align-items-center"><svg width="12" height="14"><use href="#flag" width="20" height="14"/></svg><svg width="6" height="16"><use href="#ddots"/></svg></span></div>
   <div class="trow d-flex"><span class="nm lv3 d-flex align-items-center"><svg width="17" height="17"><ellipse cx="9" cy="14" rx="8" ry="3" fill="#20240a"/><ellipse cx="9" cy="6" rx="3" ry="5" fill="#c3ea2e"/></svg>Head</span><span class="fl d-flex align-items-center"><svg width="12" height="14"><use href="#flag" width="20" height="14"/></svg><svg width="6" height="16"><use href="#ddots"/></svg></span></div>
   <div class="trow d-flex"><span class="nm lv0 d-flex align-items-center" style="color:#c6c6c6"><svg width="16" height="16"><circle cx="8" cy="5" r="3" fill="#8cc4ea"/><path d="M7 7h2l1 2 3 2v3H3v-3l3-2z" fill="#8cc4ea"/></svg>人偶</span><span class="fl d-flex align-items-center"><svg width="12" height="14"><use href="#flag" width="20" height="14"/></svg><svg width="6" height="16"><use href="#ddots"/></svg><svg width="10" height="10" class="ok"><use href="#chk"/></svg></span><svg width="18" height="18" style="margin-left:2px"><circle cx="5" cy="6" r="4" fill="#a06a3c" stroke="#3a2412"/><circle cx="11" cy="12" r="4" fill="#a06a3c" stroke="#3a2412"/><circle cx="4" cy="5" r="1.300" fill="#e6c09a"/><circle cx="10" cy="11" r="1.300" fill="#e6c09a"/></svg></div>
   <div class="d-flex flex-grow-1"><span class="nm"></span><span class="fl"></span></div>
   <svg class="treelines" width="60" height="184" fill="none" stroke="#9a9a9a"><path d="M7.500 1v5M7.500 14v157h8M11 10.500h5M18.500 21v5M22 30.500h5M29.500 41v5M33 50.500h5M40.500 60v91h8M40.500 70.500h8M40.500 90.500h8M40.500 110.500h8M40.500 130.500h8"/><path d="M3.500 6.500h8v8h-8zM14.500 26.500h8v8h-8zM25.500 46.500h8v8h-8zM5.500 10.500h4M16.500 30.500h4M27.500 50.500h4"/></svg>
  </div>
 </section>
 <section class="amgr flex-grow-1">
  <nav class="menu d-flex align-items-center" style="height:24px;padding:0 0 2px 5px;border-bottom:1px solid var(--edge)"><i class="ham" style="margin-right:-4px"></i><button>模式</button><button>编辑</button><button>用户数据</button><svg class="ms-auto" width="66" height="18" fill="none" stroke="#9a9a9a" stroke-width="2"><path d="M17 9H2M7 4L2 9l5 5"/><path d="M22 9h12M30 5l4 4-4 4" stroke="#555"/><path d="M49 17V3M44 8l5-5 5 5"/><circle cx="67" cy="8" r="5" stroke-width="1.500"/></svg></nav>
  <div class="d-flex align-items-center gap-1 ps-1" style="height:26px;margin-left:-2px"><svg width="20" height="20"><use href="#man"/></svg>角色 [角色]</div>
  <div class="tabs d-flex" style="padding:1px 0 0 2px"><button class="rounded-start">基本</button><button>坐标</button><button class="on">对象</button><button class="rounded-end">显示</button></div>
  <div class="fw-bold text-white" style="padding:7px 0 5px 3px">对象属性</div>
  <div class="tabs d-flex" style="padding:0 0 5px 3px"><button class="rounded-start">建立</button><button class="lt">调节</button><button>绑定</button><button class="rounded-end">动画</button></div>
  <div class="d-flex align-items-center" style="margin-left:3px;padding:4px 0 0 22px;border-top:1px solid var(--edge)"><label for="cmp" class="me-1">对象</label><select id="cmp" class="dd form-select" style="width:64px"><option>组件</option></select><label for="sym" style="margin:0 4px 0 26px">对称</label><input id="sym" type="checkbox" class="tick" checked></div>
 </section>
</aside>
</main>

<footer class="taskbar d-flex align-items-center">
 <button class="tk" aria-label="任务视图"><svg width="18" height="16" fill="none" stroke="#e8eef2" stroke-width="1.300"><path d="M1 0v3h10V0M1 16v-3h10v3M1 5h10v6H1zM15 0v3M15 13v3M15 5v6"/></svg></button>
 <button class="tk" aria-label="浏览"><svg width="22" height="22" fill="#fff" stroke="#20363f"><circle cx="7" cy="6" r="5.500"/><circle cx="16" cy="7" r="5.500"/><circle cx="15" cy="16" r="5.500"/><circle cx="6" cy="15" r="5.500"/><path d="M11 11q-5-1-6-6M11 11q1-5 6-6M11 11q5 1 6 6M11 11q-1 5-6 6" fill="none"/></svg></button>
 <div class="finder d-flex align-items-center" style="margin-left:2px"><svg width="18" height="20"><path d="M15 14q-3 5-8 3-4-3-3-8 2-4 6-4 5 1 5 6H5" fill="none" stroke="#2f9be4" stroke-width="3"/><path d="M2 17Q0 10 12 3l4-1" fill="none" stroke="#63bdf4" stroke-width="1.500"/></svg><svg width="6" height="5"><path d="M3 0l3 5H0z" fill="#999"/></svg><input aria-label="搜索" value="阿富汗国足球员坠亡"></div>
 <button class="go">搜索一下</button>
 <button class="tk app" style="margin-left:9px" aria-label="文件资源管理器"><svg width="23" height="20"><path d="M1 1h8l2 2h11v16H1z" fill="#e8b84a"/><path d="M1 6h21v13H1z" fill="#fbdc78"/><path d="M5 19v-8h13v8h-4v-4H9v4z" fill="#3f95c8"/></svg></button>
 <button class="tk app" aria-label="浏览器"><svg width="22" height="22"><circle cx="11" cy="11" r="10" fill="#67b92e" stroke="#eaf5df"/><path d="M16 14q-3 4-7 2-4-3-2-7 3-4 7-2 2 2 2 4H7" fill="none" stroke="#fff" stroke-width="2.400"/></svg></button>
 <button class="tk app" aria-label="监视器"><svg width="24" height="22"><path d="M4 1h15l3 3v12H4z" fill="#d8dde2"/><path d="M1 4h17v11H1z" fill="#c3cad1" stroke="#8a9299"/><path d="M4 11l2-3 2 4 3-6 2 6 3-3" fill="none" stroke="#2b7fc0"/><path d="M8 16h5l3 4H6z" fill="#aab1b8"/><ellipse cx="18" cy="18" rx="4" ry="3" fill="#eee"/></svg></button>
 <button class="tk app live" aria-label="Cinema 4D"><svg width="24" height="24"><circle cx="12" cy="12" r="11" fill="#c9cbd6"/><circle cx="11.500" cy="12.500" r="9" fill="#1b1c52"/><path d="M5 8q7-6 12 0 3 7-3 10Q5 19 5 8z" fill="#4352b0"/><ellipse cx="13" cy="12" rx="4" ry="5" fill="#0e1034"/></svg></button>
 <button class="tk app" style="margin-left:4px" aria-label="录屏"><svg width="24" height="24"><circle cx="12" cy="12" r="10.500" fill="#111" stroke="#fff" stroke-width="1.500"/><circle cx="12" cy="12" r="6" fill="#ee2424"/></svg></button>
 <div class="tray d-flex align-items-center ms-auto">
  <svg width="14" height="16"><path d="M1 11l6-6 6 6" fill="none" stroke="#fff" stroke-width="1.300"/></svg>
  <svg width="16" height="18"><rect x="4.500" y="1" width="7" height="11" rx="2" fill="#fff"/><path d="M3 10v4h10v-4M8 14v3M5 17h6" fill="none" stroke="#fff"/></svg>
  <svg width="18" height="18"><path d="M9 1q4 2 8 2 0 10-8 14Q1 13 1 3q4 0 8-2z" fill="#dcecff"/><path d="M9 3q3 1 6 1.500 0 8-6 11-6-3-6-11Q6 4 9 3z" fill="#3a7fd8"/><path d="M5 7l4 3.500L13 7" stroke="#fff" stroke-width="2" fill="none"/></svg>
  <svg width="16" height="16" fill="none" stroke="#fff"><path d="M5 3.500h10.500v8H4.500V8M10 12v3M6 15.500h8M.5 1.500h4v4h-4zM2.500 5.500v4"/></svg>
  <svg width="17" height="17"><circle cx="8.500" cy="8.500" r="8" fill="#9fce1a"/><circle cx="8" cy="9" r="6.500" fill="#f0e520"/><path d="M8.500 4.500v8M4.500 8.500h8" stroke="#2d8a1e" stroke-width="2"/></svg>
  <svg width="17" height="16" fill="none" stroke="#fff"><path d="M1 6h3l4-4v12l-4-4H1zM10 6q1.500 2 0 4M12 4q3 4 0 8M14.500 2q4 6 0 12"/></svg>
  <span style="font-size:13px;width:16px">中</span>
  <svg width="17" height="17" class="ms-1"><use href="#slogo"/></svg>
  <div class="clock"><div>11:55 周日</div><div>2021/8/22</div><span class="stamp">尊屏</span></div>
 </div>
 <div class="ime d-flex align-items-end">
  <svg width="32" height="32"><use href="#slogo"/></svg>
  <div class="imebar d-flex align-items-center rounded-end">
   <span>中</span>
   <svg width="24" height="18" fill="none" stroke="#1666b5" stroke-width="1.600"><circle cx="8" cy="6" r="2"/><path d="M15 9q2 3-1 6" stroke-width="2.500"/></svg>
   <svg width="24" height="18"><circle cx="12" cy="9" r="7.500" fill="#1666b5"/><path d="M8 10q4 6 8 0z" fill="#fff"/><circle cx="9.500" cy="6.500" r="1.200" fill="#fff"/><circle cx="14.500" cy="6.500" r="1.200" fill="#fff"/></svg>
   <svg width="24" height="18" fill="none" stroke="#1666b5" stroke-width="1.600"><rect x="9.500" y="2" width="5" height="8" rx="2.500" fill="#1666b5"/><path d="M7 8q0 5 5 5t5-5M12 13v4"/></svg>
   <svg width="24" height="18"><rect x="4" y="3" width="15" height="12" rx="1" fill="#1666b5"/><path d="M6 6h11M6 9h11" stroke="#fff" stroke-width="1.500" stroke-dasharray="2 1"/><path d="M8 12.500h7" stroke="#fff"/></svg>
   <svg width="24" height="18" fill="#bbb"><circle cx="11" cy="5" r="3.500"/><path d="M5 15q0-6 6-6t5 6z"/><path d="M13 9h7v6h-7z" fill="#fff" stroke="#bbb"/></svg>
   <svg width="24" height="18"><path d="M8 2q4 3 8 0l4 3-2 4-2-1v8H8V8L6 9 4 5z" fill="#1666b5"/></svg>
   <svg width="24" height="18" fill="#1666b5"><rect x="5" y="2" width="6" height="6" rx="1"/><rect x="12" y="2" width="6" height="6" rx="2"/><rect x="5" y="9" width="6" height="6" rx="1"/><rect x="12" y="9" width="6" height="6" rx="1"/></svg>
  </div>
 </div>
</footer>
</body>
</html>
